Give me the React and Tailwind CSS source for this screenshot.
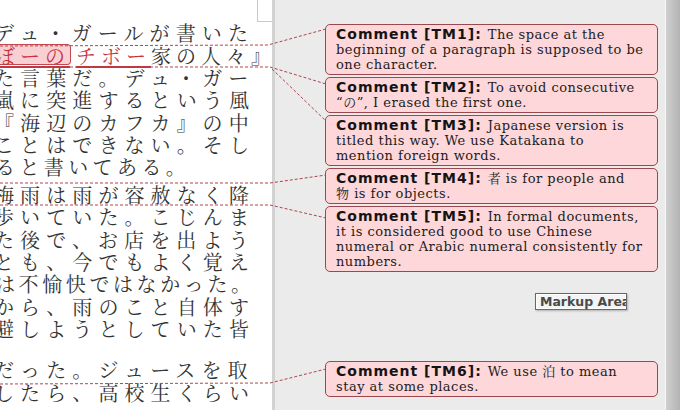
import React from "react";

const jp = { fontFamily: '"Noto Serif CJK JP", "Noto Sans CJK JP", serif' };
const serif = { fontFamily: '"DejaVu Serif", "Noto Serif CJK JP", "Noto Sans CJK JP", serif' };
const bold = { fontFamily: '"DejaVu Sans", Verdana, sans-serif' };

const Row = ({ children, cls = "tracking-[6.1px] -ml-[6px]" }) => (
  <div className={`whitespace-nowrap h-[22.4px] ${cls}`}>{children}</div>
);

const Comment = ({ id, lines, className = "" }) => (
  <div
    className={`border border-[#9b474e] rounded-[5px] bg-[#fdd7da] pl-[10px] pr-[8px] py-[2px] text-[13px] leading-[15px] text-[#1c1c1c] tracking-[0.5px] ${className}`}
    style={serif}
  >
    {lines.map((l, i) => (
      <div key={i} className="whitespace-nowrap">
        {i === 0 && (
          <span className="font-bold text-[14px] text-[#141414] tracking-[1px] mr-[6px]" style={bold}>
            Comment [{id}]:
          </span>
        )}
        {l}
      </div>
    ))}
  </div>
);

export default function App() {
  return (
    <div className="relative w-[680px] h-[410px] overflow-hidden flex bg-[#ebebeb]">
      {/* page */}
      <div
        className="relative w-[275px] h-full bg-white border-r-[3px] border-[#d2d2d2] overflow-hidden text-[20px] leading-[22.4px] text-[#333333] pt-[22px]"
        style={jp}
      >
        <div className="absolute top-0 right-0 w-[15px] h-[22px] bg-white border-l border-b border-[#c9c9c9]" />
        <Row>デュ・ガールが書いた</Row>
        <Row cls="tracking-[5px] -ml-[5px]">
          <span className="inline-block h-[21px] leading-[21px] bg-[#f8d0d3] text-[#c7333d] underline decoration-[#c7333d] underline-offset-[2px] border-r border-y border-[#c2474f] rounded-r-[4px]">
            ぼーの
          </span>
          <span className="ml-[5px] text-[#c7333d] underline decoration-[#c7333d] underline-offset-[2px]">
            チボー
          </span>
          家の人々』
        </Row>
        <Row>た言葉だ。デュ・ガー</Row>
        <Row>嵐に突進するという風</Row>
        <Row>『海辺のカフカ』の中</Row>
        <Row>ことはできない。そし</Row>
        <Row cls="tracking-[4.4px] -ml-[5px]">ると書いてある。</Row>
        <div className="mt-[5px]">
          <Row>梅雨は雨が容赦なく降</Row>
          <Row>歩いていた。こじんま</Row>
          <Row>た後で、お店を出よう</Row>
          <Row>とも、今でもよく覚え</Row>
          <Row cls="tracking-[3.6px] -ml-[5px]">は不愉快ではなかった。</Row>
          <Row>から、雨のこと自体す</Row>
          <Row>避しようとしていた皆</Row>
        </div>
        <div className="h-[19px]" />
        <Row>だった。ジュースを取</Row>
        <Row>したら、高校生くらい</Row>
      </div>

      {/* markup area */}
      <div className="flex-1 flex flex-col pt-[24px] pl-[50px] pr-[7px] gap-[2px]">
        <Comment id="TM1" lines={["The space at the", "beginning of a paragraph is supposed to be", "one character."]} />
        <Comment id="TM2" lines={["To avoid consecutive", "“の”, I erased the first one."]} />
        <Comment id="TM3" lines={["Japanese version is", "titled this way.  We use Katakana to", "mention foreign words."]} />
        <Comment id="TM4" lines={["者 is for people and", "物 is for objects."]} />
        <Comment id="TM5" lines={["In formal documents,", "it is considered good to use Chinese", "numeral or Arabic numeral consistently for", "numbers."]} />
        <div
          className="self-end mr-[31px] mt-[19px] w-[92px] h-[17px] border border-[#686868] bg-[#f4f4f4] shadow-[inset_0_0_0_1px_#ffffff,1px_1px_2px_rgba(0,0,0,0.25)] overflow-hidden whitespace-nowrap pl-[4px] text-[12.5px] leading-[15px] font-semibold text-[#4a4a4a]"
          style={{ fontFamily: '"DejaVu Sans", sans-serif' }}
        >
          Markup Area
        </div>
        <Comment id="TM6" className="mt-[49px]" lines={["We use 泊 to mean", "stay at some places."]} />
      </div>

      {/* scrollbar */}
      <div className="w-[15px] h-full border-l border-[#f7f7f7] bg-gradient-to-r from-[#cfcfcf] to-[#b3b3b3]" />

      {/* comment connector lines */}
      <svg className="absolute inset-0 pointer-events-none" width="680" height="410">
        <g fill="none" stroke="#b0454c" strokeWidth="1" strokeDasharray="3 2">
          <polyline points="0,46 268,45 326,29" />
          <polyline points="0,67 270,67 326,84" />
          <polyline points="272,69 326,121" />
          <polyline points="0,183 270,183 326,175" />
          <polyline points="0,205 270,205 326,218" />
          <polyline points="0,384 270,383 326,369" />
        </g>
      </svg>
    </div>
  );
}
